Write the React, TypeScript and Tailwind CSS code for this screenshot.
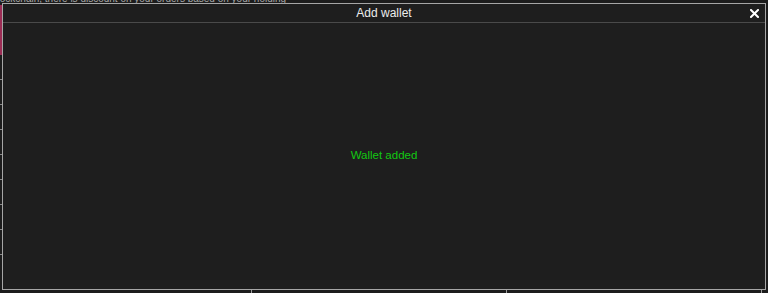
import React from "react";

export default function App() {
  const ticks = [0, 1, 2, 3, 4, 5, 6, 7];
  return (
    <div className="relative w-[768px] h-[293px] overflow-hidden bg-[#1c1c1c] font-['Liberation_Sans',Arial,sans-serif]">
      {/* background page, in flow */}
      <div className="flex flex-col h-full">
        <div className="h-[3px] overflow-visible whitespace-nowrap text-[10px] leading-[10px] text-[#a8a8a8] -mt-[6px] -ml-[8px]">
          blockchain, there is discount on your orders based on your holding
        </div>
        <div className="flex-1 flex flex-col pt-[8px]">
          <div className="w-[3px] h-[50px] bg-[#9c2d55]" />
          <div className="flex flex-col gap-[24px] pt-[24px]">
            {ticks.map((t) => (
              <div key={t} className="w-[3px] h-px bg-[#8a8a8a]" />
            ))}
          </div>
        </div>
        <div className="h-[4px] flex pl-[251px] gap-[254px]">
          <div className="w-px h-full bg-[#9a9a9a]" />
          <div className="w-px h-full bg-[#9a9a9a]" />
          <div className="w-px h-full bg-[#9a9a9a]" />
        </div>
      </div>

      {/* modal overlay */}
      <div className="absolute left-[2px] top-[3px] w-[764px] h-[287px] border border-[#a6a6a6] bg-[#1e1e1e] flex flex-col">
        <div className="relative h-[19px] shrink-0 border-b border-[#4a4a4a] flex items-center justify-center">
          <span className="text-[12px] text-[#ececec] leading-none">Add wallet</span>
          <svg
            className="absolute right-[6px] top-[5px]"
            width="9"
            height="9"
            viewBox="0 0 9 9"
          >
            <path d="M1 1 L8 8 M8 1 L1 8" stroke="#ffffff" strokeWidth="2" strokeLinecap="square" />
          </svg>
        </div>
        <div className="flex-1 flex items-center justify-center">
          <span className="text-[11.5px] text-[#12c812] leading-none">Wallet added</span>
        </div>
      </div>
    </div>
  );
}
